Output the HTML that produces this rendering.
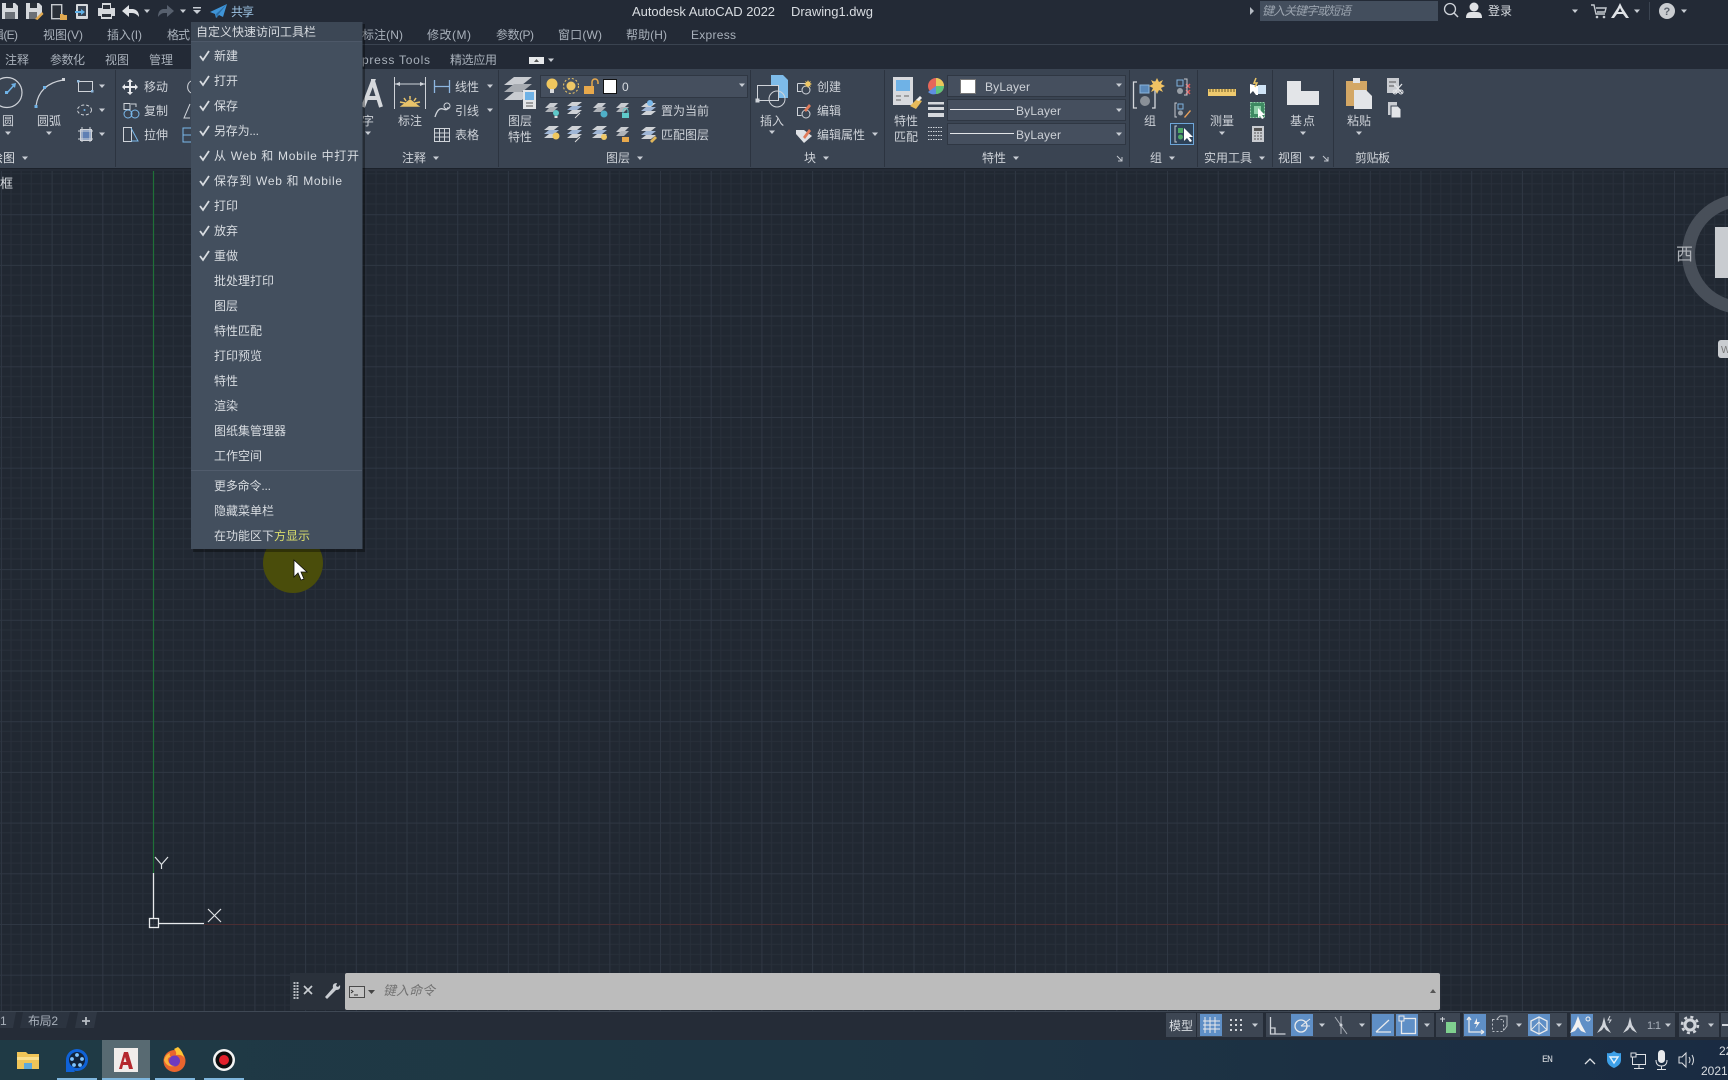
<!DOCTYPE html>
<html lang="zh"><head><meta charset="utf-8"><title>Autodesk AutoCAD 2022</title>
<style>
html,body{margin:0;padding:0;background:#212832;width:1728px;height:1080px;overflow:hidden}
svg{display:block}
text{font-family:"Liberation Sans","Noto Sans CJK SC",sans-serif;font-size:12px;fill:#ced2d8}
.m{fill:#a9b1bb}
.w{fill:#d8dce1}
.i{font-style:italic;fill:#8f98a3}
.s{stroke:#cfd3d9;fill:none;stroke-width:1.3}
.l{fill:#d5d8dc}
</style></head><body>
<svg width="1728" height="1080" viewBox="0 0 1728 1080" xmlns="http://www.w3.org/2000/svg">
<defs>
<polygon id="c" points="-3,-1.5 3,-1.5 0,2" fill="#c8cdd4"/>
<pattern id="g" patternUnits="userSpaceOnUse" x="153" y="924" width="50.7" height="50.7">
<rect width="50.7" height="50.7" fill="#212832"/>
<path d="M10.14 0V50.7M20.28 0V50.7M30.42 0V50.7M40.56 0V50.7M0 10.14H50.7M0 20.28H50.7M0 30.42H50.7M0 40.56H50.7" stroke="#282f3a" stroke-width="1"/>
<path d="M0.5 0V50.7M0 0.5H50.7" stroke="#2f3743" stroke-width="1"/>
</pattern>
<g id="ly"><polygon points="0,5 5,0 13,0 8,5" fill="#c9ccd1"/><polygon points="0,9 5,4 13,4 8,9" fill="#aeb2b8"/></g>
<g id="ly3"><polygon points="-1,4 4,0 14,0 9,4" fill="#cfd2d6"/><polygon points="-1,8 4,4 14,4 9,8" fill="#9fb6d6"/><polygon points="-1,12 4,8 14,8 9,12" fill="#cfd2d6"/></g>
</defs>

<!-- canvas -->
<rect width="1728" height="1080" fill="#232a36"/>
<rect x="0" y="171" width="1728" height="841" fill="url(#g)"/>
<line x1="153.5" y1="171" x2="153.5" y2="873" stroke="#1f7038" stroke-width="1.200"/>
<line x1="204" y1="924.5" x2="1728" y2="924.5" stroke="#4b2e33" stroke-width="1"/>

<!-- title bar -->
<path d="M2 3h13l3 3v13H2z" class="l"/><rect x="6" y="3" width="7" height="5" fill="#2a3039"/><rect x="5" y="12" width="10" height="7" fill="#6b7077"/>
<path d="M26 3h13l3 3v7l-6 6H26z" class="l"/><rect x="30" y="3" width="7" height="5" fill="#2a3039"/><rect x="29" y="12" width="8" height="7" fill="#6b7077"/><path d="M35 19l7-7 1.500 2-6 6z" fill="#e0a84f"/>
<rect x="51.700" y="4.700" width="10" height="14" fill="#2a3039" stroke="#c4c8cd" stroke-width="1.400"/><path d="M60 14h3l1 1h3v5h-7z" fill="#e0a84f"/>
<rect x="76" y="4" width="12" height="15" rx="1" fill="#d5d8dc"/><rect x="78" y="6" width="8" height="10" fill="#3a4452"/><path d="M75 11h6v-2l4 3-4 3v-2h-6z" fill="#5fb0e6"/>
<path d="M102 3h9v5h4v8h-3v3h-11v-3h-3V8h4z" class="l"/><rect x="103" y="5" width="7" height="4" fill="#2a3039"/><rect x="102" y="14" width="9" height="3" fill="#2a3039"/>
<path d="M122 11l7-6v4h4q6 1 6 8q-3-4-7-4h-3v4z" fill="#dfe2e6"/>
<use href="#c" x="147" y="11"/>
<path d="M174 11l-7-6v4h-4q-5 1-5 8q3-4 6-4h3v4z" fill="#57606e"/>
<use href="#c" x="183" y="11"/>
<rect x="193" y="7" width="8" height="1.500" fill="#c8cdd4"/><polygon points="193,10 201,10 197,14" fill="#c8cdd4"/>
<path d="M227 4L210 12l5 2 1 4 3-3 4 2z" fill="#3f95d8"/><path d="M227 4l-11 10 1 4 1-3z" fill="#2a6ea8"/>
<text x="231" y="16" textLength="23" style="fill:#9cc2e2">共享</text>
<text x="632" y="16" textLength="143" class="w" style="font-size:13px">Autodesk AutoCAD 2022</text>
<text x="791" y="16" textLength="82" class="w" style="font-size:13px">Drawing1.dwg</text>
<polygon points="1250,7 1254,11 1250,15" fill="#b4bac2"/>
<rect x="1260" y="1" width="178" height="20" fill="#434e5d"/>
<text x="1262" y="15" textLength="89" class="i" style="fill:#9aa3ae">键入关键字或短语</text>
<circle cx="1450" cy="9" r="5.500" fill="none" stroke="#cfd3d9" stroke-width="1.300"/><line x1="1454" y1="13" x2="1458" y2="17" stroke="#cfd3d9" stroke-width="1.500"/>
<circle cx="1474" cy="7" r="4.500" fill="#e0e2e5"/><path d="M1466 18q0-6 5-6h6q5 0 5 6z" fill="#e0e2e5"/>
<text x="1488" y="15" textLength="24" class="w">登录</text>
<use href="#c" x="1575" y="11"/>
<path d="M1591 5h3l2 9h9M1596 8h10l-1 4h-8" fill="none" stroke="#c5c9cf" stroke-width="1.400"/><circle cx="1597" cy="17" r="1.300" fill="#c5c9cf"/><circle cx="1604" cy="17" r="1.300" fill="#c5c9cf"/>
<path d="M1620 3l2.500 5 6.500 10h-3l-3-4h-6l-3 4h-3l6.500-10zM1620 8l-2 4h4z" fill="#dfe2e6" fill-rule="evenodd"/><use href="#c" x="1637" y="11"/>
<line x1="1649.500" y1="2" x2="1649.500" y2="20" stroke="#3b4451"/>
<circle cx="1667" cy="11" r="8" fill="#c9ccd0"/><text x="1663.500" y="15" style="font-size:11px;fill:#5a616b;font-weight:bold">?</text>
<use href="#c" x="1684" y="11"/>

<!-- menu bar -->
<line x1="0" y1="44.500" x2="1728" y2="44.500" stroke="#3a4350"/>
<text x="-8" y="39" textLength="26" class="m">辑(E)</text>
<text x="43" y="39" textLength="40" class="m">视图(V)</text>
<text x="107" y="39" textLength="35" class="m">插入(I)</text>
<text x="167" y="39" textLength="23" class="m">格式</text>
<text x="362" y="39" textLength="41" class="m">标注(N)</text>
<text x="427" y="39" textLength="44" class="m">修改(M)</text>
<text x="496" y="39" textLength="38" class="m">参数(P)</text>
<text x="558" y="39" textLength="44" class="m">窗口(W)</text>
<text x="626" y="39" textLength="41" class="m">帮助(H)</text>
<text x="691" y="39" textLength="45" class="m">Express</text>

<!-- tabs -->
<text x="5" y="64" textLength="24" class="m">注释</text>
<text x="50" y="64" textLength="35" class="m">参数化</text>
<text x="105" y="64" textLength="24" class="m">视图</text>
<text x="149" y="64" textLength="24" class="m">管理</text>
<text x="362" y="64" textLength="68" class="m">press Tools</text>
<text x="450" y="64" textLength="47" class="m">精选应用</text>
<rect x="529" y="57" width="15" height="7" fill="#e6e8ea"/><polygon points="534,62 539,62 536.500,59" fill="#555"/>
<use href="#c" x="551" y="60"/>

<!-- ribbon -->
<rect x="0" y="69" width="1728" height="99" fill="#3a4452"/>
<rect x="0" y="168" width="1728" height="3" fill="#252c37"/>
<line x1="0" y1="168.500" x2="1728" y2="168.500" stroke="#1c222b"/>
<path d="M115.500 70V167M498.500 70V167M750.500 70V167M884.500 70V167M1129.500 70V167M1197.500 70V167M1272.500 70V167M1333.500 70V167" stroke="#2c3440" stroke-width="1"/>

<!-- draw panel -->
<circle cx="7" cy="92.500" r="15" fill="none" stroke="#cfd3d9" stroke-width="1.200"/><line x1="7" y1="93" x2="15" y2="84" stroke="#6fb2e6" stroke-width="1.500"/><rect x="5" y="91" width="3" height="3" fill="#6fb2e6"/><polygon points="16,83 11,84 15,88" fill="#6fb2e6"/>
<text x="2" y="125" textLength="12">圆</text><use href="#c" x="8" y="133"/>
<path d="M36 106Q39 84 63 80" fill="none" stroke="#cfd3d9" stroke-width="1.200"/><rect x="34.500" y="105" width="3" height="3" fill="#6fb2e6"/><rect x="43" y="86" width="3" height="3" fill="#6fb2e6"/><rect x="62" y="78" width="3" height="3" fill="#cfd3d9"/>
<text x="37" y="125" textLength="24">圆弧</text><use href="#c" x="49" y="133"/>
<rect x="78.500" y="81.500" width="14" height="10" fill="none" stroke="#cfd3d9"/><rect x="77" y="80" width="2.500" height="2.500" fill="#8fb8dc"/><rect x="91" y="90" width="2.500" height="2.500" fill="#8fb8dc"/><use href="#c" x="102" y="86"/>
<ellipse cx="84.500" cy="110" rx="7" ry="5" fill="none" stroke="#cfd3d9" stroke-dasharray="3 2"/><circle cx="84.500" cy="110" r="1" fill="#6fb2e6"/><use href="#c" x="102" y="110"/>
<rect x="80.500" y="129.500" width="11" height="11" fill="#5f80b4" stroke="#cfd3d9"/><path d="M78 131h15M78 139h15M82 127v15M90 127v15" stroke="#cfd3d9"/><use href="#c" x="102" y="134"/>
<text x="-9" y="162" textLength="24" class="w">绘图</text><use href="#c" x="25" y="158"/>

<!-- modify panel -->
<path d="M130 79l3 3h-2v4h4v-2l3 3-3 3v-2h-4v4h2l-3 3-3-3h2v-4h-4v2l-3-3 3-3v2h4v-4h-2z" fill="#e8eaed"/>
<text x="144" y="91" textLength="24">移动</text>
<rect x="124" y="103.500" width="6" height="6" fill="none" stroke="#cfd3d9"/><path d="M131 104h5v3" fill="none" stroke="#cfd3d9"/><circle cx="128" cy="114" r="4" fill="none" stroke="#7ab8ea"/><circle cx="135" cy="114" r="4" fill="none" stroke="#7ab8ea"/>
<text x="144" y="115" textLength="24">复制</text>
<path d="M123.500 127.500h8v14h-8z" fill="none" stroke="#cfd3d9"/><path d="M131 128l7 13h-7" fill="none" stroke="#7ab8ea"/>
<text x="144" y="139" textLength="24">拉伸</text>
<path d="M191 81a7 7 0 0 0 0 12" fill="none" stroke="#cfd3d9"/>
<path d="M190 104l-6 14h6" fill="none" stroke="#cfd3d9"/>
<path d="M191 128h-8v14h8M183 135h8" fill="none" stroke="#7ab8ea"/>

<!-- annotate -->
<path d="M363 107l10-26h-2M381 107l-8-26M367 98h11" fill="none" stroke="#d5d8dc" stroke-width="4"/>
<text x="362" y="125" textLength="18">字</text><use href="#c" x="368" y="133"/>
<path d="M394.500 77v32M425.500 77v32M395 84h30" fill="none" stroke="#cfd3d9"/><polygon points="395,84 400,82 400,86" fill="#cfd3d9"/><polygon points="425,84 420,82 420,86" fill="#cfd3d9"/>
<path d="M402 106l8-6 8 6zM400 102l5 1M420 102l-5 1M410 96v3M404 98l2 3M416 98l-2 3" stroke="#e8c36a" fill="#e8c36a" stroke-width="1.500"/>
<text x="398" y="125" textLength="24">标注</text>
<path d="M434.500 80v13M449.500 80v13M435 86.500h14" fill="none" stroke="#8db6e0" stroke-width="1.300"/>
<text x="455" y="91" textLength="24">线性</text><use href="#c" x="490" y="86"/>
<path d="M435 117q3-10 8-8t5-2" fill="none" stroke="#cfd3d9" stroke-width="1.300"/><circle cx="447" cy="106" r="3" fill="none" stroke="#cfd3d9"/>
<text x="455" y="115" textLength="24">引线</text><use href="#c" x="490" y="110"/>
<rect x="434.500" y="128.500" width="15" height="13" fill="none" stroke="#cfd3d9"/><path d="M434 133h15M434 137h15M439.500 129v12M444.500 129v12" stroke="#cfd3d9"/>
<text x="455" y="139" textLength="24">表格</text>
<text x="402" y="162" textLength="24">注释</text><use href="#c" x="436" y="158"/>

<!-- layers panel -->
<polygon points="504,85 514,77 532,77 522,85" fill="#c9ccd1"/><polygon points="504,92 514,84 532,84 522,92" fill="#a8acb2"/><polygon points="504,100 514,92 530,92 522,100" fill="#c9ccd1"/>
<rect x="523" y="90" width="13" height="19" fill="#e3e5e8"/><rect x="525" y="92" width="9" height="8" fill="#6fb2e6"/><path d="M526 103h7M526 106h7" stroke="#555"/>
<text x="508" y="125" textLength="24">图层</text><text x="508" y="141" textLength="24">特性</text>
<rect x="540.500" y="75.500" width="207" height="22" fill="#454f5e" stroke="#2f3743"/>
<circle cx="552" cy="84" r="5.500" fill="#f0c75e"/><rect x="550" y="89" width="4" height="4" fill="#d9dadc"/>
<circle cx="571" cy="86" r="4.500" fill="#eec766"/><circle cx="571" cy="86" r="7.500" fill="none" stroke="#eec766" stroke-dasharray="2 2"/>
<rect x="584" y="86" width="10" height="8" fill="#e8a94c"/><path d="M592 86v-4a3 3 0 0 1 6 0v2" fill="none" stroke="#e8a94c" stroke-width="1.500"/>
<rect x="603.500" y="79.500" width="13" height="14" fill="#fff" stroke="#111"/>
<text x="622" y="91" textLength="7" class="w">0</text><use href="#c" x="742" y="85"/>
<use href="#ly" x="545" y="103"/><circle cx="556" cy="113" r="3" fill="#5fc9c9"/><rect x="554.500" y="116" width="3" height="2" fill="#ddd"/>
<use href="#ly3" x="568" y="102"/><path d="M575 118l5-5" stroke="#ddd"/>
<use href="#ly" x="593" y="103"/><circle cx="604" cy="114" r="3.500" fill="#4fb0c8"/>
<use href="#ly" x="616" y="103"/><rect x="622" y="113" width="7" height="5" fill="#5fc9c9"/><path d="M623 113v-2a2.500 2.500 0 0 1 5 0v2" fill="none" stroke="#5fc9c9"/>
<use href="#ly3" x="642" y="103"/><circle cx="650" cy="103" r="3" fill="#7ab8ea"/>
<text x="661" y="115" textLength="48">置为当前</text>
<use href="#ly3" x="545" y="126"/><circle cx="556" cy="136" r="3.500" fill="#f0c75e"/>
<use href="#ly3" x="568" y="126"/><path d="M575 142l5-5" stroke="#ddd"/>
<use href="#ly3" x="593" y="126"/><circle cx="604" cy="137" r="3" fill="#eec766"/>
<use href="#ly" x="616" y="127"/><rect x="622" y="137" width="7" height="5" fill="#e8a94c"/>
<use href="#ly3" x="642" y="127"/><path d="M650 141l5-5 2 2-5 5z" fill="#e0b65a"/>
<text x="661" y="139" textLength="48">匹配图层</text>
<text x="606" y="162" textLength="24">图层</text><use href="#c" x="640" y="158"/>

<!-- block -->
<path d="M771 75h12l5 5v18h-17z" fill="#7dbbe9"/>
<rect x="757.500" y="85.500" width="21" height="15" fill="#3a4452" stroke="#cfd3d9"/><circle cx="777" cy="99" r="8" fill="none" stroke="#cfd3d9"/><rect x="755.500" y="98.500" width="4" height="4" fill="#cfd3d9"/>
<text x="760" y="125" textLength="24">插入</text><use href="#c" x="772" y="132"/>
<path d="M797.500 83.500h10M797.500 83.500v8h4" fill="none" stroke="#cfd3d9"/><circle cx="806" cy="90" r="4" fill="none" stroke="#cfd3d9"/><path d="M808 80l1 2 2-1-1 2 2 1-2 1 1 2-2-1-1 2-1-2-2 1 1-2-2-1 2-1-1-2 2 1z" fill="#eec766"/>
<text x="817" y="91" textLength="24">创建</text>
<path d="M797.500 107.500h10M797.500 107.500v8h4" fill="none" stroke="#cfd3d9"/><circle cx="806" cy="114" r="4" fill="none" stroke="#cfd3d9"/><path d="M804 110l5-6 2 2-5 6z" fill="#e07b5a"/>
<text x="817" y="115" textLength="24">编辑</text>
<path d="M796 130h8l8 6-8 7-8-9z" fill="#dfe2e6"/><path d="M803 137l6-8 2 2-6 8z" fill="#e07b5a"/>
<text x="817" y="139" textLength="48">编辑属性</text><use href="#c" x="875" y="134"/>
<text x="804" y="162" textLength="12">块</text><use href="#c" x="826" y="158"/>

<!-- properties -->
<rect x="893" y="77" width="20" height="28" fill="#d8dade"/><rect x="896" y="80" width="14" height="11" fill="#6fb2e6"/><path d="M896 96h5M904 96h5M896 100h5" stroke="#666"/>
<path d="M910 106l7-7 5 2-6 8z" fill="#e8bb5a"/><path d="M916 100l4-4 2 2-3 3z" fill="#f0f0f0"/>
<text x="894" y="125" textLength="24">特性</text><text x="894" y="141" textLength="24">匹配</text>
<circle cx="936" cy="86" r="8" fill="#e6675a"/><path d="M936 86V78a8 8 0 0 1 8 8z" fill="#e9c85a"/><path d="M936 86h8a8 8 0 0 1-8 8z" fill="#5fc47a"/><path d="M936 86v8a8 8 0 0 1-8-2z" fill="#5f8fe0"/>
<rect x="928" y="102" width="16" height="2.500" fill="#d5d8dc"/><rect x="928" y="107" width="16" height="3" fill="#d5d8dc"/><rect x="928" y="113" width="16" height="4" fill="#d5d8dc"/>
<path d="M928 127.500h15M928 131.500h15M928 135.500h15M928 139.500h15" stroke="#cfd3d9" stroke-dasharray="1.500 1"/>
<rect x="947.500" y="75.500" width="178" height="21" fill="#454f5e" stroke="#2f3743"/>
<rect x="947.500" y="99.500" width="178" height="21" fill="#454f5e" stroke="#2f3743"/>
<rect x="947.500" y="123.500" width="178" height="21" fill="#454f5e" stroke="#2f3743"/>
<rect x="960.500" y="79.500" width="15" height="14" fill="#fff" stroke="#777"/>
<text x="985" y="91" textLength="45">ByLayer</text>
<line x1="950" y1="109.500" x2="1014" y2="109.500" stroke="#e3e5e8"/><text x="1016" y="115" textLength="45">ByLayer</text>
<line x1="950" y1="133.500" x2="1014" y2="133.500" stroke="#e3e5e8"/><text x="1016" y="139" textLength="45">ByLayer</text>
<use href="#c" x="1119" y="85"/><use href="#c" x="1119" y="110"/><use href="#c" x="1119" y="134"/>
<text x="982" y="162" textLength="24">特性</text><use href="#c" x="1016" y="158"/>
<path d="M1117 156l5 5M1122 157v4h-4" fill="none" stroke="#c0c5cc"/>

<!-- group -->
<path d="M1137 82h-3.500v26h3.500M1152 82h3v26h-3" fill="none" stroke="#d5d8dc" stroke-width="1.300"/>
<rect x="1140" y="85" width="9" height="8" fill="#5a88b8" stroke="#8bb3da"/><circle cx="1145" cy="101" r="5" fill="#8a9097"/>
<path d="M1157 78l2 4 4-2-2 4 4 2-4 2 2 4-4-2-2 4-2-4-4 2 2-4-4-2 4-2-2-4 4 2z" fill="#f0c263"/>
<text x="1144" y="125" textLength="12">组</text>
<rect x="1177" y="80" width="6" height="6" fill="none" stroke="#7fb2de"/><circle cx="1180" cy="91" r="3" fill="#9aa0a7"/><path d="M1186 84l4 4m0-4l-4 4M1186 90l4 4m0-4l-4 4" stroke="#e25a5a" stroke-width="1.500"/><path d="M1184 79h3v16h-3" fill="none" stroke="#c5c9cf"/>
<path d="M1177 103h-2v14h2" fill="none" stroke="#c5c9cf"/><rect x="1178" y="104" width="5" height="5" fill="none" stroke="#7fb2de"/><circle cx="1180.500" cy="113" r="2.500" fill="#9aa0a7"/><path d="M1184 117l6-7 1 1-6 7z" fill="#e8a05a"/>
<rect x="1170.500" y="123.500" width="23" height="21" fill="#2e4258" stroke="#6ea6d9"/><path d="M1177 126h-2v16h2" fill="none" stroke="#c5c9cf"/><rect x="1178" y="128" width="5" height="5" fill="#4fa866"/><circle cx="1180.500" cy="137" r="2.500" fill="#4fa866"/><path d="M1184 128v13l3-3 3 4 2-1-3-4h4z" fill="#fff"/>
<text x="1150" y="162" textLength="12">组</text><use href="#c" x="1172" y="158"/>

<!-- utilities -->
<rect x="1208" y="89" width="28" height="7" fill="#efca6e"/><path d="M1210 89v3M1213 89v3M1216 89v3M1219 89v3M1222 89v3M1225 89v3M1228 89v3M1231 89v3M1234 89v3" stroke="#6b5a25"/>
<text x="1210" y="125" textLength="24">测量</text><use href="#c" x="1222" y="133"/>
<path d="M1250 84v10l3-3 3 4h2v-9z" fill="#fff"/><rect x="1258" y="85" width="8" height="9" fill="#cfe3f5"/><path d="M1256 78l-2 5h3l-2 4" fill="none" stroke="#eec766" stroke-width="1.500"/>
<rect x="1250.500" y="102.500" width="14" height="15" fill="#3e8a62" stroke="#8ed0a8" stroke-dasharray="2 1"/><rect x="1254" y="106" width="7" height="8" fill="#8ed0a8"/><path d="M1258 108v10l2-2 2 3 2-1-2-3h3z" fill="#fff"/>
<rect x="1252" y="126" width="12" height="16" fill="#c9ccd1"/><rect x="1254" y="128" width="8" height="3" fill="#555"/><path d="M1254 133h8M1254 136h8M1254 139h8" stroke="#555" stroke-dasharray="2 1"/>
<text x="1204" y="162" textLength="48">实用工具</text><use href="#c" x="1262" y="158"/>

<!-- view -->
<path d="M1287 81h14v10h18v14h-32z" fill="#e3e5e8"/>
<text x="1290" y="125" textLength="25">基点</text><use href="#c" x="1303" y="133"/>
<text x="1278" y="162" textLength="24">视图</text><use href="#c" x="1312" y="158"/>
<path d="M1323 156l5 5M1328 157v4h-4" fill="none" stroke="#c0c5cc"/>

<!-- clipboard -->
<rect x="1346" y="81" width="21" height="25" fill="#d3a765"/><rect x="1353" y="78" width="7" height="5" fill="#e3e5e8"/>
<path d="M1354 90h12l6 6v13h-18z" fill="#e3e5e8"/>
<text x="1347" y="125" textLength="24">粘贴</text><use href="#c" x="1359" y="133"/>
<rect x="1387" y="78" width="12" height="15" fill="#c9ccd1"/><path d="M1389 82h7M1389 86h5" stroke="#555"/><path d="M1394 84l8 9M1402 84l-8 9" stroke="#e3e5e8" stroke-width="1.300"/><circle cx="1395" cy="92" r="2" fill="none" stroke="#e3e5e8"/><circle cx="1401" cy="92" r="2" fill="none" stroke="#e3e5e8"/>
<rect x="1388" y="102" width="9" height="13" fill="#c9ccd1"/><path d="M1391 106h7l3 3v9h-10z" fill="#e3e5e8" stroke="#3a4452"/>
<text x="1355" y="162" textLength="35">剪贴板</text>

<!-- viewport label -->
<text x="0" y="188" textLength="14" class="w" style="font-size:13px">框</text>

<!-- viewcube -->
<circle cx="1742" cy="254" r="53.500" fill="none" stroke="#484f59" stroke-width="13"/>
<rect x="1715" y="227" width="13" height="51" fill="#c9ccd0"/>
<text x="1676" y="260" textLength="17" style="font-size:17px;fill:#aeb2b8">西</text>
<rect x="1718" y="340" width="14" height="18" rx="3" fill="#c9ccd0"/><text x="1721" y="353" style="font-size:10px;fill:#777">W</text>

<!-- UCS -->
<path d="M153.500 873V919M158 923.500h46" stroke="#e8eaec" stroke-width="1.300" fill="none"/>
<rect x="149.500" y="918.500" width="9" height="9" fill="none" stroke="#e8eaec" stroke-width="1.300"/>
<path d="M155 857l6.500 7.500 6.500-7.500M161.500 864.500V869" fill="none" stroke="#dfe2e5" stroke-width="1.200"/>
<path d="M208 909l13 13M221 909l-13 13" fill="none" stroke="#dfe2e5" stroke-width="1.200"/>

<!-- cursor highlight -->
<circle cx="293" cy="563" r="30" fill="#4a4d0b"/>

<!-- quick access menu -->
<rect x="193" y="24" width="172" height="528" fill="#000" opacity=".35"/>
<rect x="191" y="22" width="171.500" height="527" fill="#434f5e"/>
<rect x="191" y="22" width="171.500" height="19" fill="#3c4755"/>
<line x1="191" y1="41.500" x2="362" y2="41.500" stroke="#4d5868"/>
<text x="196" y="36" textLength="120" class="w">自定义快速访问工具栏</text>
<g fill="none" stroke="#d8dce1" stroke-width="1.800">
<path d="M200 56l3 4 6-9"/><path d="M200 81l3 4 6-9"/><path d="M200 106l3 4 6-9"/><path d="M200 131l3 4 6-9"/><path d="M200 156l3 4 6-9"/><path d="M200 181l3 4 6-9"/><path d="M200 206l3 4 6-9"/><path d="M200 231l3 4 6-9"/><path d="M200 256l3 4 6-9"/>
</g>
<text x="214" y="60" textLength="24" class="w">新建</text>
<text x="214" y="85" textLength="24" class="w">打开</text>
<text x="214" y="110" textLength="24" class="w">保存</text>
<text x="214" y="135" textLength="45" class="w">另存为...</text>
<text x="214" y="160" textLength="145" class="w">从 Web 和 Mobile 中打开</text>
<text x="214" y="185" textLength="128" class="w">保存到 Web 和 Mobile</text>
<text x="214" y="210" textLength="24" class="w">打印</text>
<text x="214" y="235" textLength="24" class="w">放弃</text>
<text x="214" y="260" textLength="24" class="w">重做</text>
<text x="214" y="285" textLength="60" class="w">批处理打印</text>
<text x="214" y="310" textLength="24" class="w">图层</text>
<text x="214" y="335" textLength="48" class="w">特性匹配</text>
<text x="214" y="360" textLength="48" class="w">打印预览</text>
<text x="214" y="385" textLength="24" class="w">特性</text>
<text x="214" y="410" textLength="24" class="w">渲染</text>
<text x="214" y="435" textLength="72" class="w">图纸集管理器</text>
<text x="214" y="460" textLength="48" class="w">工作空间</text>
<line x1="191" y1="470.500" x2="362" y2="470.500" stroke="#515c6c"/>
<text x="214" y="490" textLength="57" class="w">更多命令...</text>
<text x="214" y="515" textLength="60" class="w">隐藏菜单栏</text>
<text x="214" y="540" textLength="60" class="w">在功能区下</text>
<text x="274" y="540" textLength="36" style="fill:#d9dc6c">方显示</text>
<path d="M294 560v17l4-4 3 7 3-1-3-7h6z" fill="#fff" stroke="#111" stroke-width=".8"/>

<!-- command line -->
<rect x="290" y="973" width="55" height="37" fill="#2a313b"/>
<path d="M294.500 982v17M297.500 982v17" stroke="#b8bcc2" stroke-width="2" stroke-dasharray="2 1"/>
<path d="M304 986l8 8M312 986l-8 8" stroke="#c9cdd2" stroke-width="1.700"/>
<path d="M325 997l8-9q-1-5 4-5l-1 3 2 1 2-2q1 5-4 5l-9 9z" fill="#c9cdd2"/>
<rect x="345" y="973" width="1095" height="37" rx="2" fill="#bcbcbc"/>
<rect x="349.500" y="986.500" width="15" height="11" fill="#c5c5c5" stroke="#4a4a4a"/><path d="M351 990l2 1.500-2 1.500M354 995h4" stroke="#333" fill="none"/>
<polygon points="368,990 375,990 371.500,994" fill="#444"/>
<text x="383" y="995" textLength="52" style="font-style:italic;fill:#727272;font-size:13px">键入命令</text>
<polygon points="1430,993 1436,993 1433,989" fill="#555"/>

<!-- layout tabs / status bar -->
<line x1="0" y1="1011.500" x2="1728" y2="1011.500" stroke="#3f4854"/>
<rect x="0" y="1012" width="1728" height="28" fill="#252c37"/>
<path d="M0 1012h16l-3 16H0z" fill="#2f3743"/><text x="0" y="1025" textLength="4" class="m">1</text>
<path d="M23 1012h47l-4 16H20z" fill="#2c3440"/><text x="28" y="1025" textLength="30" class="m">布局2</text>
<path d="M78 1012h19l-3 16H75z" fill="#2f3743"/><path d="M82 1021h8M86 1017v8" stroke="#b8bdc4" stroke-width="1.800"/>

<g fill="#3d4653">
<rect x="1166" y="1013" width="30" height="24"/>
<rect x="1197" y="1013" width="66" height="24"/>
<rect x="1266" y="1013" width="104" height="24"/>
<rect x="1371" y="1013" width="63" height="24"/>
<rect x="1436" y="1013" width="24" height="24"/>
<rect x="1463" y="1013" width="104" height="24"/>
<rect x="1570" y="1013" width="105" height="24"/>
<rect x="1679" y="1013" width="40" height="24"/>
<rect x="1721" y="1013" width="7" height="24"/>
</g>
<g fill="#5f8fc6">
<rect x="1200" y="1014" width="22" height="22"/>
<rect x="1291" y="1014" width="22" height="22"/>
<rect x="1372" y="1014" width="22" height="22"/>
<rect x="1396" y="1014" width="22" height="22"/>
<rect x="1464" y="1014" width="22" height="22"/>
<rect x="1528" y="1014" width="22" height="22"/>
<rect x="1571" y="1014" width="22" height="22"/>
</g>
<text x="1169" y="1030" textLength="24" class="w">模型</text>
<path d="M1205 1017v16M1210 1017v16M1215 1017v16M1203 1021h17M1203 1025h17M1203 1029h17" stroke="#e8eaec"/>
<path d="M1230 1020h13M1230 1025h13M1230 1030h13" stroke="#d0d4da" stroke-width="2" stroke-dasharray="2 3"/>
<use href="#c" x="1255" y="1025"/>
<path d="M1270.500 1017v17h15" class="s"/><path d="M1270 1028h5v6" class="s"/>
<circle cx="1301" cy="1026" r="6" fill="none" stroke="#e8eaec" stroke-width="1.300"/><path d="M1301 1026l9-7M1301 1026h9" stroke="#e8eaec"/>
<use href="#c" x="1322" y="1025"/>
<path d="M1335 1017l12 17M1341 1016v18" stroke="#a9afb7"/><circle cx="1341" cy="1025" r="1.500" fill="#d0d4da"/>
<use href="#c" x="1362" y="1025"/>
<path d="M1376 1032l13-12M1376 1032h15" stroke="#e8eaec" stroke-width="1.300" fill="none"/>
<rect x="1401.500" y="1018.500" width="14" height="15" fill="none" stroke="#e8eaec" stroke-width="1.300"/><rect x="1399" y="1016" width="5" height="5" fill="#5f8fc6" stroke="#e8eaec"/>
<use href="#c" x="1427" y="1025"/>
<rect x="1446" y="1022" width="10" height="11" fill="#7fd08f"/><path d="M1440 1019h5M1442.500 1017v5" stroke="#d0d4da"/>
<path d="M1469 1017v15h15M1469 1017l-2 3M1469 1017l2 3M1484 1032l-3-2M1484 1032l-3 2" stroke="#e8eaec" fill="none" stroke-width="1.300"/><path d="M1477 1018l-3 6h3l-2 5 5-7h-3z" fill="#f0f0f0"/>
<rect x="1492.500" y="1019.500" width="11" height="12" fill="none" stroke="#b8bdc4" stroke-dasharray="2 2"/><path d="M1497 1019l3-3h7v10l-3 4" fill="none" stroke="#b8bdc4"/>
<use href="#c" x="1519" y="1025"/>
<path d="M1539 1017l8 4v9l-8 4-8-4v-9z" fill="none" stroke="#e8eaec" stroke-width="1.300"/><path d="M1531 1030l8-8 8 8M1539 1017v17" fill="none" stroke="#e8eaec" stroke-width=".9"/>
<use href="#c" x="1559" y="1025"/>
<path d="M1578 1016l3 8 5 9-5-2-3-4-3 4-5 2 5-9z" fill="#f0f0f0"/><circle cx="1588" cy="1019" r="2" fill="none" stroke="#f0f0f0"/>
<path d="M1604 1017l2 8 5 8-5-3-2-3-2 3-5 3 5-8z" fill="#d0d4da"/><path d="M1610 1016l-2 4 3 0-2 3" stroke="#d0d4da" fill="none"/>
<path d="M1630 1017l2 8 5 8-5-3-2-3-2 3-5 3 5-8z" fill="#d0d4da"/>
<text x="1647" y="1029" textLength="14" class="m" style="font-size:11px">1:1</text><use href="#c" x="1668" y="1025"/>
<circle cx="1690" cy="1025" r="5" fill="none" stroke="#d0d4da" stroke-width="3"/><circle cx="1690" cy="1025" r="8" fill="none" stroke="#d0d4da" stroke-width="2.500" stroke-dasharray="3 3.300"/>
<use href="#c" x="1711" y="1025"/>
<rect x="1722" y="1024" width="6" height="2" fill="#d0d4da"/>

<!-- taskbar -->
<defs><linearGradient id="tb" x1="0" x2="1" y1="0" y2="0"><stop offset="0" stop-color="#1f3a45"/><stop offset=".55" stop-color="#1e3544"/><stop offset="1" stop-color="#1a2b42"/></linearGradient></defs>
<rect x="0" y="1040" width="1728" height="40" fill="url(#tb)"/>
<rect x="102" y="1040" width="48" height="40" fill="#586a72"/>
<rect x="57" y="1078" width="40" height="2" fill="#7fb6dd"/><rect x="102" y="1078" width="48" height="2" fill="#7fb6dd"/><rect x="155" y="1078" width="40" height="2" fill="#7fb6dd"/><rect x="204" y="1078" width="40" height="2" fill="#7fb6dd"/>
<path d="M17 1052h9l2 2h11v15H17z" fill="#f0c558"/><rect x="17" y="1057" width="22" height="3" fill="#fbe08f"/><rect x="24" y="1063" width="8" height="6" fill="#5fa9dc"/>
<circle cx="77" cy="1060" r="11" fill="#0f62d8"/><path d="M66 1060v12h9" fill="#0f62d8"/><circle cx="77" cy="1060" r="8" fill="#11233c"/>
<g fill="#7fc4ff"><circle cx="77" cy="1055" r="1.900"/><circle cx="82" cy="1059" r="1.900"/><circle cx="80" cy="1065" r="1.900"/><circle cx="74" cy="1065" r="1.900"/><circle cx="72" cy="1059" r="1.900"/></g>
<rect x="114" y="1048" width="24" height="24" fill="#f1ecea"/>
<path d="M119 1069l5-17h4l5 17h-4l-1-4h-5l-1 4zM123.500 1062h3l-1.500-5z" fill="#b5282e" fill-rule="evenodd"/>
<circle cx="174.500" cy="1061" r="11" fill="#e9652e"/><path d="M174 1049q3 3 2 6 6-1 8 3-1-7-6-11z" fill="#ffc434"/><circle cx="174.500" cy="1061" r="5.500" fill="#6d3bbf"/><path d="M164 1060q2-6 6-7-1 3 1 4-4 0-3 4 2 5 7 5-8 2-11-6z" fill="#fbb03b"/>
<circle cx="224" cy="1060" r="11" fill="#f4f4f4"/><circle cx="224" cy="1060" r="8.500" fill="#0e0e0e"/><circle cx="224" cy="1060" r="5" fill="#e4202b"/>
<text x="1542" y="1062" textLength="11" style="font-family:'Liberation Mono',monospace;font-size:10px;fill:#d5d8dc">EN</text>
<path d="M1585 1064l5-5 5 5" fill="none" stroke="#dfe2e5" stroke-width="1.300"/>
<path d="M1607 1053q4 1 7-2 3 3 7 2v7q0 5-7 8-7-3-7-8z" fill="#3da0e8"/><path d="M1610 1057h8l-4 6z" fill="none" stroke="#e6f3fc" stroke-width="1.400"/>
<rect x="1632.500" y="1054.500" width="13" height="10" fill="none" stroke="#dfe2e5"/><rect x="1631" y="1053" width="5" height="4" fill="#1a2b42" stroke="#dfe2e5"/><path d="M1639 1065v3M1634 1068.500h10" stroke="#dfe2e5"/>
<rect x="1658" y="1050" width="7" height="13" rx="3.500" fill="#e8eaec"/><path d="M1656 1060q0 6 5.500 6t5.500-6M1661.500 1066v3M1657 1069.500h9" fill="none" stroke="#dfe2e5"/>
<path d="M1679 1057h3l4-4v14l-4-4h-3z" fill="none" stroke="#dfe2e5"/><path d="M1689 1057q2 3 0 6M1692 1055q3 5 0 10" fill="none" stroke="#dfe2e5"/>
<text x="1719" y="1055" class="w">22:</text>
<text x="1701" y="1075" class="w">2021</text>
</svg>
</body></html>
